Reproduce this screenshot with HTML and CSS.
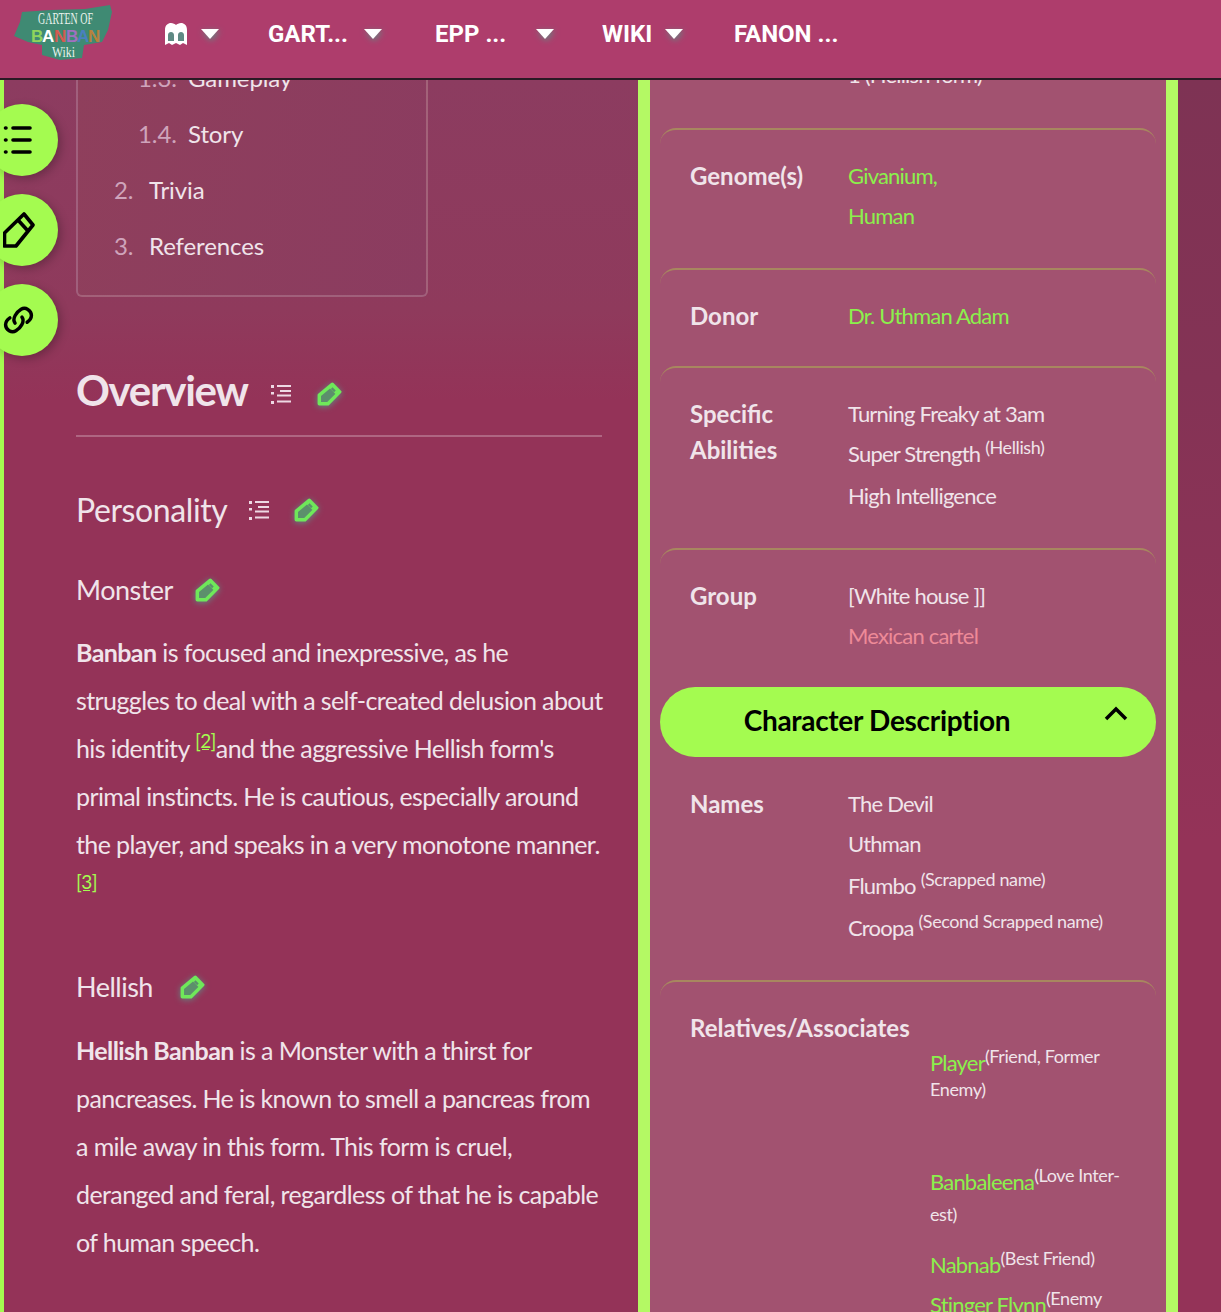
FILE: index.html
```html
<!DOCTYPE html>
<html lang="en">
<head>
  <meta charset="UTF-8">
  <meta name="viewport" content="width=device-width, initial-scale=1.0">
  <title>Banban | Garten of Banban Wiki</title>
  <link rel="stylesheet" href="styles.css">
</head>
<body>
  <header class="topbar">
    <svg class="logo" viewBox="0 0 100 60" width="100" height="60">
      <path d="M10 9 L38 7 L73 6 L98 2 L100 9 L96 27 L90 39 L72 42 L70 55 L48 57 L30 52 L30 42 L16 39 L2 33 L8 19 Z" fill="#3f8a73"/>
      <text class="logo-top" x="26" y="21" textLength="55" lengthAdjust="spacingAndGlyphs">GARTEN OF</text>
      <text class="logo-name" x="19" y="39" fill="#8fd45c">B</text>
      <text class="logo-name" x="30" y="39" fill="#fff">A</text>
      <text class="logo-name" x="42" y="39" fill="#d65a50">N</text>
      <text class="logo-name" x="54" y="39" fill="#a070c0">B</text>
      <text class="logo-name" x="65" y="39" fill="#4a80c0">A</text>
      <text class="logo-name" x="76" y="39" fill="#b8823c">N</text>
      <text class="logo-wiki" x="40" y="54" textLength="23" lengthAdjust="spacingAndGlyphs">Wiki</text>
    </svg>
    <nav class="nav">
      <a class="nav-item nav-home">
        <svg viewBox="0 0 24 24" width="24" height="24">
          <path d="M1 23 V8 C1 3 4 1 7 1 C9 1 11 2 12 3 C13 2 15 1 17 1 C20 1 23 3 23 8 V23 L19 21 L16 23 L12 21 L8 23 L5 21 Z" fill="#fff"/>
          <path d="M4 19 V13 C4 9 10 9 10 13 V19 Z M14 19 V13 C14 9 20 9 20 13 V19 Z" fill="#5f8a84"/>
        </svg>
        <span class="caret"></span>
      </a>
      <a class="nav-item nav-gart">GART...<span class="caret"></span></a>
      <a class="nav-item nav-epp">EPP ...<span class="caret"></span></a>
      <a class="nav-item nav-wiki">WIKI<span class="caret"></span></a>
      <a class="nav-item">FANON ...</a>
    </nav>
  </header>

  <div class="side-buttons">
    <a class="side-button">
      <svg viewBox="0 0 36 32" width="36" height="32" fill="none" stroke="#000" stroke-width="3.600">
        <path d="M10 4 H27 M10 16 H27 M10 28 H27" stroke-linecap="round"/>
        <path d="M2.500 4 H3 M2.500 16 H3 M2.500 28 H3" stroke-linecap="round"/>
      </svg>
    </a>
    <a class="side-button">
      <svg viewBox="0 0 36 36" width="36" height="36" fill="none" stroke="#000" stroke-width="3.600" stroke-linejoin="round">
        <path d="M1.500 21 L21 2 L30 13 L13 34 H1.500 Z M15 8 L25 19"/>
      </svg>
    </a>
    <a class="side-button">
      <svg viewBox="0 0 36 36" width="31" height="31" fill="none" stroke="#000" stroke-width="4" stroke-linecap="round">
        <path d="M14 21 C10 16 16 8 21 5 C26 2 33 6 33 12 C33 16 31 18 28 20"/>
        <path d="M22 14 C26 19 20 27 15 30 C10 33 3 29 3 23 C3 19 5 17 8 15"/>
      </svg>
    </a>
  </div>

  <main class="page">
    <article class="article">
      <div class="toc">
        <ol class="toc-list">
          <li class="toc-sub"><span class="toc-num">1.3.</span>Gameplay</li>
          <li class="toc-sub"><span class="toc-num">1.4.</span>Story</li>
          <li><span class="toc-num">2.</span>Trivia</li>
          <li><span class="toc-num">3.</span>References</li>
        </ol>
      </div>

      <h2 class="heading-main">Overview
        <svg class="icon-list" viewBox="0 0 22 22" width="22" height="22"><use href="#list-icon"/></svg>
        <svg class="icon-pen" viewBox="0 0 26 26" width="28" height="28"><use href="#pen-icon"/></svg>
      </h2>
      <h3 class="heading-sub">Personality
        <svg class="icon-list" viewBox="0 0 22 22" width="22" height="22"><use href="#list-icon"/></svg>
        <svg class="icon-pen" viewBox="0 0 26 26" width="28" height="28"><use href="#pen-icon"/></svg>
      </h3>
      <h4 class="heading-small">Monster
        <svg class="icon-pen" viewBox="0 0 26 26" width="28" height="28"><use href="#pen-icon"/></svg>
      </h4>
      <p class="text">
        <b>Banban</b> is focused and inexpressive, as he<br>
        struggles to deal with a self-created delusion about<br>
        his identity <a class="ref">[2]</a>and the aggressive Hellish form's<br>
        primal instincts. He is cautious, especially around<br>
        the player, and speaks in a very monotone manner.
        <a class="ref-line">[3]</a>
      </p>
      <h4 class="heading-small heading-hellish">Hellish
        <svg class="icon-pen" viewBox="0 0 26 26" width="28" height="28"><use href="#pen-icon"/></svg>
      </h4>
      <p class="text">
        <b>Hellish Banban</b> is a Monster with a thirst for<br>
        pancreases. He is known to smell a pancreas from<br>
        a mile away in this form. This form is cruel,<br>
        deranged and feral, regardless of that he is capable<br>
        of human speech.
      </p>
    </article>

    <aside class="infobox">
      <div class="info-inner">
        <section class="info-row info-first">
          <div class="info-label"></div>
          <div class="info-value"><div>1 (Hellish form)</div></div>
        </section>
        <section class="info-row info-genome">
          <div class="info-label">Genome(s)</div>
          <div class="info-value"><div class="link">Givanium,</div><div class="link">Human</div></div>
        </section>
        <section class="info-row">
          <div class="info-label">Donor</div>
          <div class="info-value"><div class="link">Dr. Uthman Adam</div></div>
        </section>
        <section class="info-row info-abilities">
          <div class="info-label">Specific<br>Abilities</div>
          <div class="info-value">
            <div>Turning Freaky at 3am</div>
            <div>Super Strength <sup>(Hellish)</sup></div>
            <div class="line-gap">High Intelligence</div>
          </div>
        </section>
        <section class="info-row info-group">
          <div class="info-label">Group</div>
          <div class="info-value"><div>[White house ]]</div><div class="redlink">Mexican cartel</div></div>
        </section>
        <button class="collapse">Character Description
          <svg class="chevron" viewBox="0 0 24 16" width="24" height="16" fill="none" stroke="#000" stroke-width="3.500"><path d="M2 14 L12 4 L22 14"/></svg>
        </button>
        <section class="info-row info-names">
          <div class="info-label">Names</div>
          <div class="info-value">
            <div>The Devil</div>
            <div>Uthman</div>
            <div class="line-gap">Flumbo <sup>(Scrapped name)</sup></div>
            <div class="line-gap">Croopa <sup>(Second Scrapped name)</sup></div>
          </div>
        </section>
        <section class="info-row info-relatives">
          <div class="info-label">Relatives/Associates</div>
          <ul class="relatives">
            <li class="rel-player"><span class="link">Player</span><sup>(Friend, Former</sup><span class="small">Enemy)</span></li>
            <li class="rel-banbaleena"><span class="link">Banbaleena</span><sup>(Love Inter-</sup><span class="small">est)</span></li>
            <li class="rel-nabnab"><span class="link">Nabnab</span><sup>(Best Friend)</sup></li>
            <li><span class="link">Stinger Flynn</span><sup>(Enemy</sup></li>
          </ul>
        </section>
      </div>
    </aside>
  </main>

  <svg class="icon-defs" width="0" height="0">
    <symbol id="list-icon" viewBox="0 0 22 22">
      <path d="M1 2 H4 V5 H1 Z M1 9 H4 V11.500 H1 Z M1 18 H4 V21 H1 Z" fill="#eed9e4"/>
      <path d="M7 3 H21 M10 8 H21 M7 12.500 H21 M7 18.500 H21" stroke="#eed9e4" stroke-width="2" fill="none"/>
    </symbol>
    <symbol id="pen-icon" viewBox="0 0 26 26">
      <path d="M16 4 L23 11 L12 22 H4 V14 Z" fill="#5c8f6c" stroke="#6fe85a" stroke-width="3.200" stroke-linejoin="round"/>
      <path d="M13 7 L20 14 L23 11 L16 4 Z" fill="#6fe85a"/>
      <path d="M15.500 7.500 L18.500 10.500" stroke="#5c8f6c" stroke-width="2.200"/>
    </symbol>
  </svg>
</body>
</html>
```

FILE: styles.css
```css
* {
  box-sizing: border-box;
}

body {
  margin: 0;
  height: 1312px;
  overflow: hidden;
  position: relative;
  color: #f0e4ea;
  font-family: "Lato", sans-serif;
  background: #943358;
}

.topbar {
  position: relative;
  z-index: 2;
  height: 80px;
  display: flex;
  align-items: flex-start;
  padding: 3px 0 0 12px;
  background: #ae3d6c;
  border-bottom: 2px solid #2b1a24;
}

.logo-top {
  font-family: "Liberation Serif", serif;
  font-size: 16px;
  fill: #e8f2ec;
}

.logo-name {
  font-family: "Liberation Sans", sans-serif;
  font-weight: bold;
  font-size: 17px;
}

.logo-wiki {
  font-family: "Liberation Serif", serif;
  font-size: 15px;
  fill: #e8f2ec;
}

.nav {
  display: flex;
  align-items: center;
  height: 62px;
  margin-left: 52px;
}

.nav-item {
  display: flex;
  align-items: center;
  color: #fff;
  font-family: "Roboto", sans-serif;
  font-weight: 700;
  font-size: 24px;
}

.nav-home {
  width: 104px;
}

.nav-gart {
  width: 167px;
}

.nav-epp {
  width: 167px;
}

.nav-wiki {
  width: 132px;
}

.caret {
  width: 0;
  height: 0;
  margin-left: 13px;
  border-left: 9px solid transparent;
  border-right: 9px solid transparent;
  border-top: 10px solid #fff;
  filter: drop-shadow(1px 2px 3px #5f8a84);
}

.nav-gart .caret {
  margin-left: 16px;
}

.nav-epp .caret {
  margin-left: 30px;
}

.side-buttons {
  position: absolute;
  z-index: 1;
  left: -14px;
  top: 104px;
  display: flex;
  flex-direction: column;
  gap: 18px;
}

.side-button {
  width: 72px;
  height: 72px;
  border-radius: 50%;
  background: #a4fb50;
  box-shadow: 3px 3px 10px rgba(0, 0, 0, 0.25);
  display: flex;
  align-items: center;
  padding-left: 17px;
}

.page {
  display: flex;
  height: 1232px;
  overflow: hidden;
  background: linear-gradient(180deg, #7e3354 0, #843355 300px, #943358 760px);
}

.article {
  width: 638px;
  flex: none;
  padding-left: 72px;
  border-left: 4px solid #a4fb50;
  background: linear-gradient(180deg, #8c3c60 0, #8f3a5c 230px, #943358 320px);
}

.toc {
  width: 352px;
  height: 247px;
  margin-top: -1px;
  border: 2px solid rgba(255, 255, 255, 0.18);
  border-top: 0;
  border-radius: 0 0 6px 6px;
  background: linear-gradient(100deg, #8f3f5c, #8b3c60);
}

.toc-list {
  list-style: none;
  margin: -30px 0 0;
  padding: 0 0 0 36px;
  font-size: 24px;
  line-height: 56px;
  letter-spacing: -0.1px;
}

.toc-sub {
  padding-left: 24px;
}

.toc-num {
  display: inline-block;
  width: 35px;
  color: #cfa4bb;
}

.toc-sub .toc-num {
  width: 50px;
}

.heading-main {
  margin: 54px 0 0;
  width: 526px;
  height: 86px;
  padding-top: 14px;
  font-size: 42px;
  line-height: 50px;
  font-weight: 700;
  letter-spacing: -1.300px;
  border-bottom: 2px solid rgba(255, 255, 255, 0.25);
}

.heading-sub {
  margin: 48px 0 0;
  height: 50px;
  font-size: 32px;
  line-height: 50px;
  font-weight: 400;
  letter-spacing: -0.400px;
}

.heading-small {
  margin: 35px 0 0;
  height: 40px;
  font-size: 27px;
  line-height: 40px;
  font-weight: 400;
  letter-spacing: -0.500px;
}

.heading-hellish {
  margin-top: 71px;
  height: 41px;
}

.heading-hellish .icon-pen {
  margin-left: 19px;
}

.icon-list {
  margin-left: 14px;
  vertical-align: 1px;
}

.icon-pen {
  margin-left: 14px;
  vertical-align: -2px;
  filter: drop-shadow(0 1px 3px #5f8a84);
}

.heading-small .icon-pen {
  vertical-align: -4px;
}

.text {
  margin: 18px 0 0;
  font-size: 25px;
  line-height: 48px;
  letter-spacing: -0.600px;
  white-space: nowrap;
}

.ref {
  color: #a4fb50;
  font-size: 19px;
  vertical-align: 10px;
  line-height: 1;
  text-decoration: underline;
}

.ref-line {
  display: block;
  color: #a4fb50;
  font-size: 19px;
  line-height: 28px;
  text-decoration: underline;
}

.infobox {
  width: 540px;
  flex: none;
  border-left: 12px solid #b4f964;
  border-right: 12px solid #b4f964;
  background: #a25270;
  padding: 0 10px;
}

.info-inner {
  margin-top: -25px;
  font-size: 22px;
  line-height: 40px;
  letter-spacing: -0.800px;
}

.info-row {
  display: flex;
  padding: 26px 0 30px 30px;
  border-top: 2px solid #a8875f;
  border-radius: 16px 16px 0 0;
}

.info-first {
  border-top: 0;
  padding-top: 0;
  padding-bottom: 33px;
}

.info-genome {
  padding-bottom: 32px;
}

.info-abilities {
  padding-bottom: 32px;
}

.info-group {
  padding-bottom: 31px;
}

.info-names {
  border-top: 0;
  padding-top: 27px;
  padding-bottom: 32px;
}

.info-label {
  width: 158px;
  flex: none;
  font-size: 24px;
  font-weight: 700;
  letter-spacing: 0;
  white-space: nowrap;
}

.info-abilities .info-label {
  line-height: 36px;
  padding-top: 2px;
}

.line-gap {
  margin-top: 2px;
}

.info-value sup {
  font-size: 18px;
  line-height: 1;
  letter-spacing: -0.400px;
}

.link {
  color: #8bf04c;
}

.redlink {
  color: #ee8a98;
}

.collapse {
  display: flex;
  align-items: center;
  justify-content: center;
  position: relative;
  width: 100%;
  height: 70px;
  margin: 0;
  padding: 0 62px 4px 0;
  border: none;
  border-radius: 35px;
  background: #a4fb50;
  color: #000;
  font-family: inherit;
  font-size: 28px;
  font-weight: 700;
  letter-spacing: -0.300px;
}

.chevron {
  position: absolute;
  right: 28px;
  top: 18px;
}

.info-relatives {
  padding-bottom: 0;
}

.info-relatives .info-label {
  width: 0;
}

.relatives {
  list-style: none;
  margin: 35px 0 0;
  padding: 0 0 0 240px;
  white-space: nowrap;
}

.relatives li {
  line-height: 40px;
}

.relatives sup {
  font-size: 18px;
  line-height: 1;
  letter-spacing: -0.400px;
}

.rel-player {
  margin-bottom: 60px;
}

.rel-banbaleena {
  margin-bottom: 18px;
}

.small {
  display: block;
  margin-top: -7px;
  font-size: 18px;
  line-height: 26px;
  letter-spacing: -0.400px;
}

.rel-banbaleena .small {
  margin-top: -1px;
}

.icon-defs {
  position: absolute;
}
```
